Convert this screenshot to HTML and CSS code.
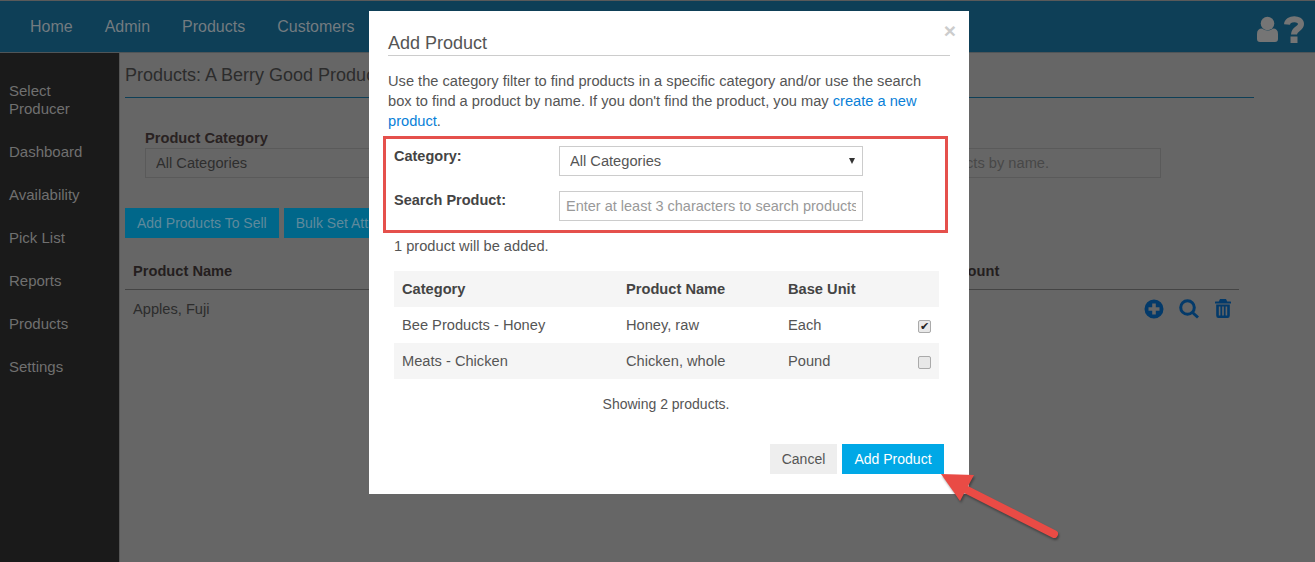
FILE: index.html
```html
<!DOCTYPE html>
<html lang="en">
<head>
    <meta charset="UTF-8">
    <meta name="viewport" content="width=device-width, initial-scale=1.0">
    <title>Add Product</title>
    <link rel="stylesheet" href="styles.css">
</head>
<body>
    <header class="topbar">
        <nav class="topnav">
            <a href="#">Home</a>
            <a href="#">Admin</a>
            <a href="#">Products</a>
            <a href="#">Customers</a>
        </nav>
        <div class="topbar-icons">
            <svg class="icon-user" viewBox="0 0 21 27" width="21" height="27" aria-hidden="true">
                <circle cx="10.5" cy="7.5" r="6.8"/>
                <path d="M0 23 V18 Q0 12.5 5 12.5 Q10.5 16.5 16 12.5 Q21 12.5 21 18 V23 Q21 26 18 26 H3 Q0 26 0 23 Z"/>
            </svg>
            <svg class="icon-help" viewBox="0 0 20 27" width="20" height="27" aria-hidden="true">
                <path class="help-curve" d="M3 8.5 C3.5 1.5 17 1.5 17 8 C17 13 10 12.5 10 18.5"/>
                <rect x="6.5" y="20.5" width="7" height="6.5"/>
            </svg>
        </div>
    </header>

    <div class="layout">
        <aside class="sidebar">
            <a href="#">Select Producer</a>
            <a href="#">Dashboard</a>
            <a href="#">Availability</a>
            <a href="#">Pick List</a>
            <a href="#">Reports</a>
            <a href="#">Products</a>
            <a href="#">Settings</a>
        </aside>

        <main class="content">
            <h1 class="page-title">Products: A Berry Good Producer</h1>

            <div class="filters">
                <div class="filter-group">
                    <label for="filter-category">Product Category</label>
                    <select id="filter-category">
                        <option>All Categories</option>
                    </select>
                </div>
                <input class="filter-search" type="text" placeholder="Search for products by name.">
            </div>

            <div class="actions">
                <button type="button">Add Products To Sell</button>
                <button type="button">Bulk Set Attributes</button>
            </div>

            <table class="product-table">
                <colgroup>
                    <col class="col-name">
                    <col class="col-amount">
                    <col>
                </colgroup>
                <thead>
                    <tr>
                        <th>Product Name</th>
                        <th>Amount</th>
                        <th></th>
                    </tr>
                </thead>
                <tbody>
                    <tr>
                        <td>Apples, Fuji</td>
                        <td></td>
                        <td>
                            <div class="row-icons">
                                <svg viewBox="0 0 20 20" width="20" height="20" aria-hidden="true">
                                    <path fill-rule="evenodd" d="M10 .5 a9.5 9.5 0 1 0 0 19 a9.5 9.5 0 0 0 0 -19 Z M8.2 4.5 H11.8 V8.2 H15.5 V11.8 H11.8 V15.5 H8.2 V11.8 H4.5 V8.2 H8.2 Z"/>
                                </svg>
                                <svg class="icon-search" viewBox="0 0 21 20" width="21" height="20" aria-hidden="true">
                                    <circle cx="8.5" cy="8.5" r="6.8"/>
                                    <path d="M13.5 13.5 L19 18.5"/>
                                </svg>
                                <svg viewBox="0 0 16 19" width="16" height="19" aria-hidden="true">
                                    <path fill-rule="evenodd" d="M5 0 H11 L12.2 2.4 H15.5 Q16 2.4 16 3 V4.6 H0 V3 Q0 2.4 .5 2.4 H3.8 Z M1.2 5.6 H14.8 V16.5 Q14.8 19 12.5 19 H3.5 Q1.2 19 1.2 16.5 Z M3.8 7.5 V16.6 H5.4 V7.5 Z M7.2 7.5 V16.6 H8.8 V7.5 Z M10.6 7.5 V16.6 H12.2 V7.5 Z"/>
                                </svg>
                            </div>
                        </td>
                    </tr>
                </tbody>
            </table>
        </main>
    </div>

    <div class="modal">
        <button class="modal-close" type="button">&times;</button>
        <h4 class="modal-title">Add Product</h4>
        <p class="modal-intro">Use the category filter to find products in a specific category and/or use the search box to find a product by name. If you don't find the product, you may <a href="#">create a new product</a>.</p>

        <div class="modal-form">
            <div class="form-row">
                <label for="category">Category:</label>
                <div class="select-wrap">
                    <select id="category">
                        <option>All Categories</option>
                    </select>
                </div>
            </div>
            <div class="form-row">
                <label for="search">Search Product:</label>
                <input id="search" type="text" placeholder="Enter at least 3 characters to search products">
            </div>
        </div>

        <p class="added-note">1 product will be added.</p>

        <table class="pick-table">
            <colgroup>
                <col class="col-category">
                <col class="col-product">
                <col class="col-unit">
                <col>
            </colgroup>
            <thead>
                <tr>
                    <th>Category</th>
                    <th>Product Name</th>
                    <th>Base Unit</th>
                    <th></th>
                </tr>
            </thead>
            <tbody>
                <tr>
                    <td>Bee Products - Honey</td>
                    <td>Honey, raw</td>
                    <td>Each</td>
                    <td class="pick-cell"><input type="checkbox" checked></td>
                </tr>
                <tr>
                    <td>Meats - Chicken</td>
                    <td>Chicken, whole</td>
                    <td>Pound</td>
                    <td class="pick-cell"><input type="checkbox"></td>
                </tr>
            </tbody>
        </table>

        <p class="showing-note">Showing 2 products.</p>

        <div class="modal-footer">
            <button class="btn-cancel" type="button">Cancel</button>
            <button class="btn-add" type="button">Add Product</button>
        </div>

        <div class="callout-box"></div>
    </div>

    <!-- annotation arrow pointing at the Add Product button -->
    <svg class="callout-arrow" viewBox="0 0 130 75" width="130" height="75" aria-hidden="true">
        <path class="arrow-shaft" d="M30 19 L119 64"/>
        <path class="arrow-head" d="M6 4 L39 5 L25 31 Z"/>
    </svg>
</body>
</html>
```

FILE: styles.css
```css
body {
    font-family: "Liberation Sans", Arial, sans-serif;
    font-size: 14.65px;
    margin: 0;
    height: 562px;
    overflow: hidden;
    background-color: #666;
    color: #2e2e2e;
}
a {
    text-decoration: none;
}

/* top bar */
.topbar {
    display: flex;
    align-items: center;
    height: 51px;
    background-color: #0e3f57;
    border-top: 1px solid #5a5a5a;
    border-bottom: 1px solid #4f5558;
}
.topnav {
    display: flex;
    gap: 32px;
    padding-left: 30px;
}
.topnav a {
    color: #737b80;
    font-size: 16px;
}
.topbar-icons {
    display: flex;
    gap: 6px;
    margin-left: auto;
    padding: 5px 11px 0 0;
}
.topbar-icons svg {
    fill: #757575;
}
.help-curve {
    fill: none;
    stroke: #757575;
    stroke-width: 6;
}

/* page behind the dialog */
.layout {
    display: flex;
    height: 509px;
}
.sidebar {
    display: flex;
    flex-direction: column;
    gap: 25px;
    box-sizing: border-box;
    width: 120px;
    padding: 29px 9px 0;
    background-color: #1a1a1a;
    border-right: 1px solid #555;
}
.sidebar a {
    color: #707070;
    font-size: 15px;
    line-height: 18px;
}
.content {
    width: 1129px;
    margin-left: 5px;
}
.page-title {
    margin: 0;
    height: 45px;
    box-sizing: border-box;
    padding-top: 11px;
    border-bottom: 1px solid #0e3f57;
    font-size: 18px;
    font-weight: normal;
    line-height: 22px;
    color: #2c2c2c;
}
.filters {
    display: flex;
    justify-content: space-between;
    align-items: flex-end;
    width: 1016px;
    margin: 30px 0 0 20px;
}
.filter-group label {
    display: block;
    font-weight: bold;
    line-height: 20px;
    color: #292222;
}
.filters select,
.filter-search {
    box-sizing: border-box;
    height: 30px;
    background: transparent;
    border: 1px solid #5a5a5a;
    font-family: inherit;
    font-size: 14.65px;
    color: #2e2e2e;
    padding: 0 10px;
}
.filters select {
    display: block;
    width: 300px;
    appearance: none;
}
.filter-search {
    width: 315px;
}
.filter-search::placeholder {
    color: #484848;
}
.actions {
    display: flex;
    gap: 5px;
    margin-top: 30px;
}
.actions button {
    height: 30px;
    padding: 0 12px;
    background-color: #00678a;
    border: none;
    color: #5f8a9c;
    font-family: inherit;
    font-size: 14px;
}
.product-table {
    table-layout: fixed;
    width: 1114px;
    margin-top: 14px;
    border-collapse: collapse;
}
.col-name {
    width: 811px;
}
.col-amount {
    width: 70px;
}
.product-table th {
    height: 37px;
    padding: 0 8px;
    border-bottom: 1px solid #444;
    text-align: left;
    color: #241e1e;
}
.product-table td {
    padding: 9px 8px;
    line-height: 20px;
    color: #2c2c2c;
}
.row-icons {
    display: flex;
    justify-content: flex-end;
    gap: 15px;
}
.row-icons svg {
    fill: #033a6a;
}
.row-icons .icon-search {
    fill: none;
    stroke: #033a6a;
    stroke-width: 3;
}

/* dialog */
.modal {
    position: absolute;
    left: 369px;
    top: 11px;
    box-sizing: border-box;
    width: 600px;
    height: 483px;
    padding: 20px 19px;
    background: #fff;
    color: #555;
}
.modal-close {
    position: absolute;
    right: 13px;
    top: 9px;
    padding: 0;
    background: none;
    border: none;
    color: #ccc;
    font-family: inherit;
    font-size: 21px;
    font-weight: bold;
    line-height: 22px;
}
.modal-title {
    margin: 0;
    border-bottom: 1px solid #ccc;
    font-size: 18px;
    font-weight: normal;
    line-height: 24px;
    color: #555;
}
.modal-intro {
    margin: 15px 0 0;
    padding-right: 12px;
    line-height: 20px;
}
.modal-intro a {
    color: #0a7fd8;
}
.modal-form {
    display: flex;
    flex-direction: column;
    gap: 15px;
    margin-top: 15px;
}
.form-row {
    display: flex;
    padding-left: 6px;
}
.form-row label {
    width: 165px;
    font-size: 14.5px;
    font-weight: bold;
    line-height: 20px;
    color: #444;
}
.form-row + .form-row label {
    margin-top: -1px;
}
.select-wrap {
    position: relative;
}
.select-wrap::after {
    content: "";
    position: absolute;
    right: 8px;
    top: 12px;
    border-left: 3px solid transparent;
    border-right: 3px solid transparent;
    border-top: 6px solid #333;
}
.form-row select,
.form-row input {
    display: block;
    box-sizing: border-box;
    width: 304px;
    height: 30px;
    background: #fff;
    border: 1px solid #ccc;
    border-radius: 0;
    font-family: inherit;
    color: #555;
    outline: none;
}
.form-row select {
    padding: 0 10px;
    font-size: 14.65px;
    appearance: none;
}
.form-row input {
    padding: 0 6px;
    font-size: 14.5px;
}
.form-row input::placeholder {
    color: #999;
}
.added-note {
    margin: 15px 0 0 6px;
    line-height: 20px;
}
.pick-table {
    table-layout: fixed;
    width: 545px;
    margin: 15px 0 0 6px;
    border-collapse: collapse;
}
.col-category {
    width: 224px;
}
.col-product {
    width: 162px;
}
.col-unit {
    width: 110px;
}
.pick-table th,
.pick-table td {
    height: 36px;
    padding: 0 8px;
    text-align: left;
}
.pick-table th {
    background-color: #f5f5f5;
    color: #444;
}
.pick-table tbody tr:nth-child(even) td {
    background-color: #f5f5f5;
}
.pick-cell input {
    appearance: none;
    display: block;
    position: relative;
    top: 1px;
    width: 13px;
    height: 13px;
    margin: 0 0 0 auto;
    background-color: #e8e8e8;
    border: 1px solid #aaa;
    border-radius: 2px;
    box-sizing: border-box;
}
.pick-cell input:checked::after {
    content: "\2714";
    display: block;
    font-family: "DejaVu Sans", sans-serif;
    font-size: 11px;
    line-height: 11px;
    text-align: center;
    color: #222;
}
.showing-note {
    margin: 15px 0 0 5px;
    width: 546px;
    font-size: 14px;
    line-height: 20px;
    text-align: center;
}
.modal-footer {
    display: flex;
    justify-content: flex-end;
    gap: 5px;
    margin: 30px 6px 0 0;
}
.modal-footer button {
    height: 30px;
    padding: 0;
    border: none;
    font-family: inherit;
    font-size: 14px;
}
.btn-cancel {
    width: 67px;
    background-color: #eee;
    color: #555;
}
.btn-add {
    width: 102px;
    background-color: #00a8e6;
    color: #fff;
}

/* annotations */
.callout-box {
    position: absolute;
    left: 14px;
    top: 125px;
    box-sizing: border-box;
    width: 565px;
    height: 97px;
    border: 3px solid #e5504c;
}
.callout-arrow {
    position: absolute;
    left: 935px;
    top: 470px;
    filter: drop-shadow(1px 2px 1px rgba(0, 0, 0, 0.35));
}
.arrow-shaft {
    fill: none;
    stroke: #e94b45;
    stroke-width: 8;
    stroke-linecap: round;
}
.arrow-head {
    fill: #e94b45;
}
```
